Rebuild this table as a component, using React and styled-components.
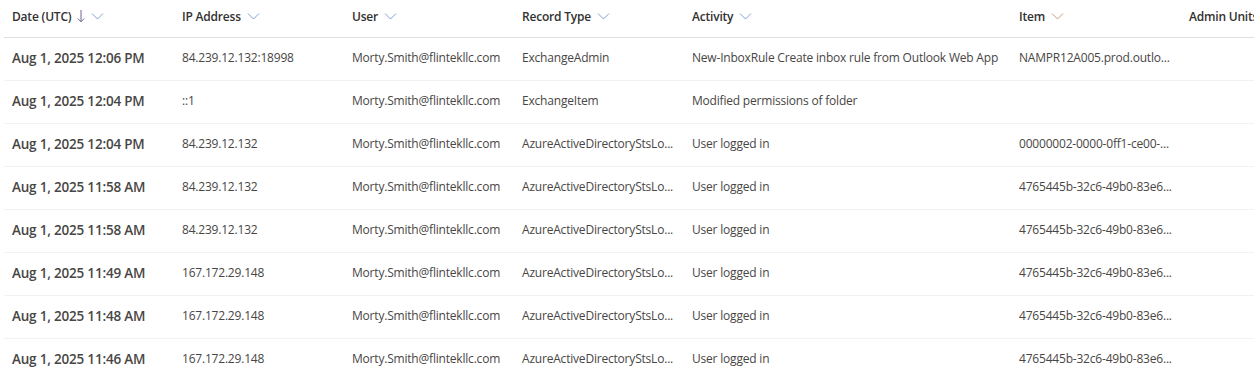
import React from "react";
import styled, { createGlobalStyle } from "styled-components";

const Global = createGlobalStyle`
  html, body { margin: 0; padding: 0; background: #ffffff; overflow: hidden; }
  body { font-family: "Open Sans", "Noto Sans", sans-serif; }
`;

const COLS = "170px 170px 170px 170px 327px 170px 170px";

const Table = styled.div`
  margin-left: 4px;
  width: 1400px;
`;

const HeaderRow = styled.div`
  display: grid;
  grid-template-columns: ${COLS};
  height: 38px;
  padding-bottom: 5px;
  box-sizing: border-box;
  align-items: center;
  border-bottom: 1px solid #e1dfdd;
`;

const HeaderCell = styled.div`
  display: flex;
  align-items: center;
  gap: 6px;
  padding-left: 8px;
  font-size: 12px;
  font-weight: 600;
  color: #323130;
  white-space: nowrap;
  letter-spacing: -0.2px;
`;

const Row = styled.div`
  display: grid;
  grid-template-columns: ${COLS};
  height: 43px;
  padding-bottom: 3px;
  box-sizing: border-box;
  align-items: center;
  border-bottom: 1px solid #f3f2f1;
`;

const Cell = styled.div`
  padding-left: 8px;
  font-size: 12px;
  color: #484644;
  white-space: nowrap;
  overflow: hidden;
  letter-spacing: -0.2px;
`;

const DateCell = styled(Cell)`
  font-size: 13.5px;
  font-weight: 600;
  color: #484644;
`;

const Chevron = ({ color = "#7d9fd3" }) => (
  <svg width="13" height="8" viewBox="0 0 13 8" fill="none">
    <polyline points="1,1.5 6.5,7 12,1.5" stroke={color} strokeWidth="1" />
  </svg>
);

const SortArrow = () => (
  <svg width="8" height="14" viewBox="0 0 8 14" fill="none">
    <line x1="4" y1="1" x2="4" y2="12.5" stroke="#6d6490" strokeWidth="1" />
    <polyline points="0.8,9.5 4,12.8 7.2,9.5" stroke="#6d6490" strokeWidth="1" />
  </svg>
);

const headers = [
  { label: "Date (UTC)", sort: true },
  { label: "IP Address" },
  { label: "User" },
  { label: "Record Type" },
  { label: "Activity" },
  { label: "Item", warm: true },
  { label: "Admin Units", noChev: true },
];

const rows = [
  ["Aug 1, 2025 12:06 PM", "84.239.12.132:18998", "ExchangeAdmin", "New-InboxRule Create inbox rule from Outlook Web App", "NAMPR12A005.prod.outlo..."],
  ["Aug 1, 2025 12:04 PM", "::1", "ExchangeItem", "Modified permissions of folder", ""],
  ["Aug 1, 2025 12:04 PM", "84.239.12.132", "AzureActiveDirectoryStsLo...", "User logged in", "00000002-0000-0ff1-ce00-..."],
  ["Aug 1, 2025 11:58 AM", "84.239.12.132", "AzureActiveDirectoryStsLo...", "User logged in", "4765445b-32c6-49b0-83e6..."],
  ["Aug 1, 2025 11:58 AM", "84.239.12.132", "AzureActiveDirectoryStsLo...", "User logged in", "4765445b-32c6-49b0-83e6..."],
  ["Aug 1, 2025 11:49 AM", "167.172.29.148", "AzureActiveDirectoryStsLo...", "User logged in", "4765445b-32c6-49b0-83e6..."],
  ["Aug 1, 2025 11:48 AM", "167.172.29.148", "AzureActiveDirectoryStsLo...", "User logged in", "4765445b-32c6-49b0-83e6..."],
  ["Aug 1, 2025 11:46 AM", "167.172.29.148", "AzureActiveDirectoryStsLo...", "User logged in", "4765445b-32c6-49b0-83e6..."],
];

export default function App() {
  return (
    <>
      <Global />
      <Table>
        <HeaderRow>
          {headers.map((h) => (
            <HeaderCell key={h.label}>
              {h.label}
              {h.sort && <SortArrow />}
              {!h.noChev && <Chevron color={h.warm ? "#c99a7c" : "#7d9fd3"} />}
            </HeaderCell>
          ))}
        </HeaderRow>
        {rows.map((r, i) => (
          <Row key={i}>
            <DateCell>{r[0]}</DateCell>
            <Cell>{r[1]}</Cell>
            <Cell>Morty.Smith@flintekllc.com</Cell>
            <Cell>{r[2]}</Cell>
            <Cell>{r[3]}</Cell>
            <Cell>{r[4]}</Cell>
            <Cell></Cell>
          </Row>
        ))}
      </Table>
    </>
  );
}
